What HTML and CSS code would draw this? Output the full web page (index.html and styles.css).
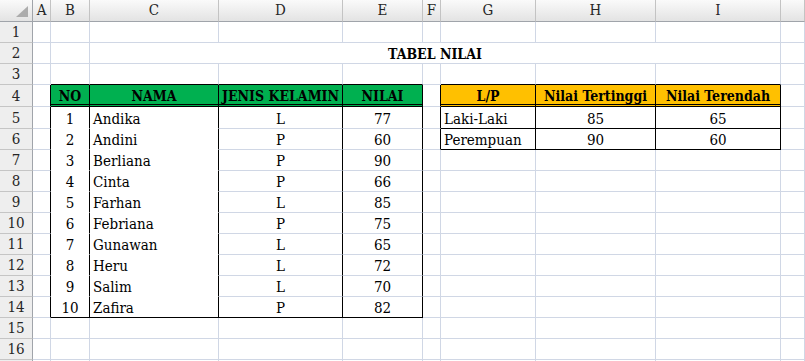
FILE: index.html
```html
<!DOCTYPE html>
<html lang="id">
<head>
    <meta charset="UTF-8">
    <meta name="viewport" content="width=device-width, initial-scale=1.0">
    <title>Tabel Nilai</title>
    <link rel="stylesheet" href="styles.css">
</head>
<body>
<div class="sheet">

    <!-- column letters -->
    <div class="row head">
        <div class="cell corner"><span class="corner-mark"></span></div>
        <div class="cell">A</div>
        <div class="cell">B</div>
        <div class="cell">C</div>
        <div class="cell">D</div>
        <div class="cell">E</div>
        <div class="cell">F</div>
        <div class="cell">G</div>
        <div class="cell">H</div>
        <div class="cell">I</div>
        <div class="cell"></div>
    </div>

    <div class="row">
        <div class="cell rh">1</div>
        <div class="cell"></div><div class="cell"></div><div class="cell"></div><div class="cell"></div><div class="cell"></div>
        <div class="cell"></div><div class="cell"></div><div class="cell"></div><div class="cell"></div><div class="cell"></div>
    </div>

    <div class="row">
        <div class="cell rh">2</div>
        <div class="cell"></div>
        <div class="cell"></div>
        <div class="cell title">TABEL NILAI</div>
        <div class="cell"></div>
    </div>

    <div class="row">
        <div class="cell rh">3</div>
        <div class="cell"></div>
        <div class="cell top"></div><div class="cell top"></div><div class="cell top"></div><div class="cell top"></div>
        <div class="cell"></div>
        <div class="cell top"></div><div class="cell top"></div><div class="cell top"></div>
        <div class="cell"></div>
    </div>

    <!-- table headers -->
    <div class="row tall">
        <div class="cell rh">4</div>
        <div class="cell edge"></div>
        <div class="cell th green">NO</div>
        <div class="cell th green">NAMA</div>
        <div class="cell th green">JENIS KELAMIN</div>
        <div class="cell th green">NILAI</div>
        <div class="cell edge"></div>
        <div class="cell th orange">L/P</div>
        <div class="cell th orange">Nilai Tertinggi</div>
        <div class="cell th orange">Nilai Terendah</div>
        <div class="cell"></div>
    </div>

    <div class="row tall">
        <div class="cell rh">5</div>
        <div class="cell edge"></div>
        <div class="cell td fill c">1</div>
        <div class="cell td fill">Andika</div>
        <div class="cell td c">L</div>
        <div class="cell td c">77</div>
        <div class="cell edge"></div>
        <div class="cell td bot">Laki-Laki</div>
        <div class="cell td bot c">85</div>
        <div class="cell td bot c">65</div>
        <div class="cell"></div>
    </div>

    <div class="row">
        <div class="cell rh">6</div>
        <div class="cell edge"></div>
        <div class="cell td fill c">2</div>
        <div class="cell td fill">Andini</div>
        <div class="cell td c">P</div>
        <div class="cell td c">60</div>
        <div class="cell edge"></div>
        <div class="cell td bot">Perempuan</div>
        <div class="cell td bot c">90</div>
        <div class="cell td bot c">60</div>
        <div class="cell"></div>
    </div>

    <div class="row">
        <div class="cell rh">7</div>
        <div class="cell edge"></div>
        <div class="cell td fill c">3</div>
        <div class="cell td fill">Berliana</div>
        <div class="cell td c">P</div>
        <div class="cell td c">90</div>
        <div class="cell"></div><div class="cell"></div><div class="cell"></div><div class="cell"></div><div class="cell"></div>
    </div>

    <div class="row">
        <div class="cell rh">8</div>
        <div class="cell edge"></div>
        <div class="cell td fill c">4</div>
        <div class="cell td fill">Cinta</div>
        <div class="cell td c">P</div>
        <div class="cell td c">66</div>
        <div class="cell"></div><div class="cell"></div><div class="cell"></div><div class="cell"></div><div class="cell"></div>
    </div>

    <div class="row">
        <div class="cell rh">9</div>
        <div class="cell edge"></div>
        <div class="cell td fill c">5</div>
        <div class="cell td fill">Farhan</div>
        <div class="cell td c">L</div>
        <div class="cell td c">85</div>
        <div class="cell"></div><div class="cell"></div><div class="cell"></div><div class="cell"></div><div class="cell"></div>
    </div>

    <div class="row">
        <div class="cell rh">10</div>
        <div class="cell edge"></div>
        <div class="cell td fill c">6</div>
        <div class="cell td fill">Febriana</div>
        <div class="cell td c">P</div>
        <div class="cell td c">75</div>
        <div class="cell"></div><div class="cell"></div><div class="cell"></div><div class="cell"></div><div class="cell"></div>
    </div>

    <div class="row">
        <div class="cell rh">11</div>
        <div class="cell edge"></div>
        <div class="cell td fill c">7</div>
        <div class="cell td fill">Gunawan</div>
        <div class="cell td c">L</div>
        <div class="cell td c">65</div>
        <div class="cell"></div><div class="cell"></div><div class="cell"></div><div class="cell"></div><div class="cell"></div>
    </div>

    <div class="row">
        <div class="cell rh">12</div>
        <div class="cell edge"></div>
        <div class="cell td fill c">8</div>
        <div class="cell td fill">Heru</div>
        <div class="cell td c">L</div>
        <div class="cell td c">72</div>
        <div class="cell"></div><div class="cell"></div><div class="cell"></div><div class="cell"></div><div class="cell"></div>
    </div>

    <div class="row">
        <div class="cell rh">13</div>
        <div class="cell edge"></div>
        <div class="cell td fill c">9</div>
        <div class="cell td fill">Salim</div>
        <div class="cell td c">L</div>
        <div class="cell td c">70</div>
        <div class="cell"></div><div class="cell"></div><div class="cell"></div><div class="cell"></div><div class="cell"></div>
    </div>

    <div class="row">
        <div class="cell rh">14</div>
        <div class="cell edge"></div>
        <div class="cell td bot c">10</div>
        <div class="cell td bot">Zafira</div>
        <div class="cell td bot c">P</div>
        <div class="cell td bot c">82</div>
        <div class="cell"></div><div class="cell"></div><div class="cell"></div><div class="cell"></div><div class="cell"></div>
    </div>

    <div class="row">
        <div class="cell rh">15</div>
        <div class="cell"></div><div class="cell"></div><div class="cell"></div><div class="cell"></div><div class="cell"></div>
        <div class="cell"></div><div class="cell"></div><div class="cell"></div><div class="cell"></div><div class="cell"></div>
    </div>

    <div class="row">
        <div class="cell rh">16</div>
        <div class="cell"></div><div class="cell"></div><div class="cell"></div><div class="cell"></div><div class="cell"></div>
        <div class="cell"></div><div class="cell"></div><div class="cell"></div><div class="cell"></div><div class="cell"></div>
    </div>

    <!-- next row peeks in under the window edge -->
    <div class="row">
        <div class="cell rh"></div>
        <div class="cell"></div><div class="cell"></div><div class="cell"></div><div class="cell"></div><div class="cell"></div>
        <div class="cell"></div><div class="cell"></div><div class="cell"></div><div class="cell"></div><div class="cell"></div>
    </div>

</div>
</body>
</html>
```

FILE: styles.css
```css
* {
    box-sizing: border-box;
}

body {
    margin: 0;
    background-color: #ffffff;
    font-family: "DejaVu Serif", "Liberation Serif", serif;
    font-stretch: condensed;
    font-size: 15px;
    color: #000000;
    overflow: hidden;
}

.sheet {
    width: 805px;
    height: 361px;
    overflow: hidden;
}

.row {
    display: grid;
    grid-template-columns: 33px 18px 39px 129px 124px 80px 18px 95px 120px 125px 1fr;
    height: 21px;
}
.row.head {
    height: 22px;
}
.row.tall {
    height: 22px;
}

.cell {
    display: flex;
    align-items: flex-end;
    padding: 0 3px;
    line-height: 17px;
    white-space: nowrap;
    overflow: hidden;
    border-right: 1px solid #d0d7e5;
    border-bottom: 1px solid #d0d7e5;
}
.c {
    justify-content: center;
}

/* column letters and row numbers */
.head .cell {
    align-items: center;
    justify-content: center;
    padding: 0;
    color: #262626;
    background: linear-gradient(#fafafa, #e3e3e3);
    border-right-color: #c3c3c3;
    border-bottom-color: #a0a4aa;
}
.head .corner {
    align-items: flex-end;
    justify-content: flex-end;
    padding: 0 4px 4px 0;
    border-right-color: #a0a4aa;
}
.corner-mark {
    width: 0;
    height: 0;
    border-left: 12px solid transparent;
    border-bottom: 11px solid #acacac;
}
.rh {
    justify-content: center;
    padding: 0 0 1px;
    color: #262626;
    background-color: #eeeeee;
    border-right-color: #a0a4aa;
    border-bottom-color: #c5c5c5;
}

.title {
    grid-column: span 7;
    justify-content: center;
    font-size: 14px;
    font-weight: bold;
    padding: 0;
}

/* table borders */
.top {
    border-bottom-color: #000000;
}
.edge {
    border-right-color: #000000;
}
.th {
    justify-content: center;
    font-weight: bold;
    font-size: 14px;
    line-height: 16px;
    border-right-color: #000000;
    border-bottom: 3px double #000000;
    padding: 0;
}
.green {
    background-color: #00b050;
}
.orange {
    background-color: #ffc000;
}
.td {
    border-right-color: #000000;
}
.fill {
    border-bottom-color: #ffffff;
}
.bot {
    border-bottom-color: #000000;
}
```
